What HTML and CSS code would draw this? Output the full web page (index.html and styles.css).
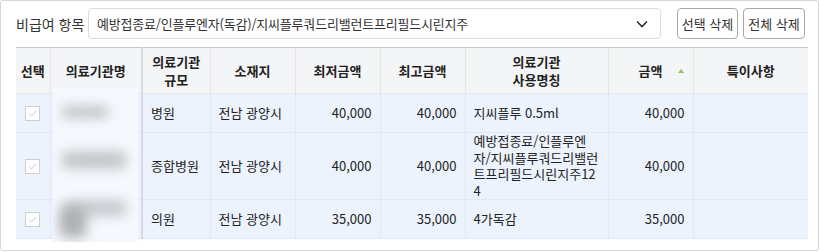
FILE: index.html
```html
<!DOCTYPE html>
<html lang="ko">
<head>
<meta charset="utf-8">
<link rel="stylesheet" href="styles.css">
</head>
<body>
<div class="panel">
  <div class="toolbar">
    <span class="label">비급여 항목</span>
    <div class="select">
      <span class="select-text">예방접종료/인플루엔자(독감)/지씨플루쿼드리밸런트프리필드시린지주</span>
      <svg class="chev" width="12" height="8" viewBox="0 0 12 8"><path d="M1 1.5 L6 6.5 L11 1.5" fill="none" stroke="#333" stroke-width="1.6"/></svg>
    </div>
    <button class="btn">선택 삭제</button>
    <button class="btn">전체 삭제</button>
  </div>
  <div class="table-wrap">
    <table class="grid">
      <colgroup>
        <col style="width:34px"><col style="width:92px"><col style="width:68px"><col style="width:85px"><col style="width:85px"><col style="width:85px"><col style="width:143px"><col style="width:85px"><col style="width:115px">
      </colgroup>
      <thead>
        <tr>
          <th>선택</th>
          <th class="frozen">의료기관명</th>
          <th><span class="two">의료기관</span><span class="two">규모</span></th>
          <th>소재지</th>
          <th>최저금액</th>
          <th>최고금액</th>
          <th><span class="two">의료기관</span><span class="two">사용명칭</span></th>
          <th class="sort">금액<span class="tri"></span></th>
          <th>특이사항</th>
        </tr>
      </thead>
      <tbody>
        <tr>
          <td class="chk"><span class="box"><svg width="9" height="7" viewBox="0 0 9 7"><path d="M1 3.5 L3.5 6 L8 1" fill="none" stroke="#c8c8c8" stroke-width="1"/></svg></span></td>
          <td class="frozen"></td>
          <td>병원</td>
          <td>전남 광양시</td>
          <td class="num">40,000</td>
          <td class="num">40,000</td>
          <td>지씨플루 0.5ml</td>
          <td class="num">40,000</td>
          <td></td>
        </tr>
        <tr>
          <td class="chk"><span class="box"><svg width="9" height="7" viewBox="0 0 9 7"><path d="M1 3.5 L3.5 6 L8 1" fill="none" stroke="#c8c8c8" stroke-width="1"/></svg></span></td>
          <td class="frozen"></td>
          <td>종합병원</td>
          <td>전남 광양시</td>
          <td class="num">40,000</td>
          <td class="num">40,000</td>
          <td class="wrap">예방접종료/인플루엔자/지씨플루쿼드리밸런트프리필드시린지주124</td>
          <td class="num">40,000</td>
          <td></td>
        </tr>
        <tr>
          <td class="chk"><span class="box"><svg width="9" height="7" viewBox="0 0 9 7"><path d="M1 3.5 L3.5 6 L8 1" fill="none" stroke="#c8c8c8" stroke-width="1"/></svg></span></td>
          <td class="frozen"></td>
          <td>의원</td>
          <td>전남 광양시</td>
          <td class="num">35,000</td>
          <td class="num">35,000</td>
          <td>4가독감</td>
          <td class="num">35,000</td>
          <td></td>
        </tr>
      </tbody>
    </table>
    <div class="mask">
      <div class="blob b1"></div>
      <div class="blob b2"></div>
      <div class="blob b3"></div>
      <div class="blob b4"></div>
    </div>
  </div>
</div>
</body>
</html>
```
FILE: styles.css
```css
* { box-sizing: border-box; }
html, body { margin: 0; padding: 0; background: #fff; }
body {
  font-family: "Noto Sans CJK KR", "Noto Sans", sans-serif;
  color: #222;
  font-size: 13px;
}
.panel {
  width: 819px;
  height: 251px;
  border: 1px solid #d6d6d6;
  border-radius: 3px;
  padding: 7px 12px 0 15px;
}
.toolbar {
  display: flex;
  align-items: center;
  height: 31px;
}
.label {
  font-size: 14px;
  color: #333;
  width: 72px;
  flex: none;
}
.select {
  flex: none;
  width: 573px;
  height: 31px;
  border: 1px solid #dcdcdc;
  border-radius: 4px;
  display: flex;
  align-items: center;
  justify-content: space-between;
  padding: 0 12px 0 8px;
  margin-right: 16px;
}
.select-text { font-size: 13px; color: #333; letter-spacing: -0.2px; white-space: nowrap; }
.btn {
  flex: none;
  white-space: nowrap;
  width: 61px;
  height: 31px;
  padding: 0;
  font-family: inherit;
  font-size: 13px;
  color: #333;
  background: #fff;
  border: 1px solid #a8a8a8;
  border-radius: 4px;
  margin-right: 5px;
}
.btn + .btn { width: 62px; margin-right: 0; }
.table-wrap {
  position: relative;
  margin-top: 8px;
  width: 792px;
}
.grid {
  border-collapse: collapse;
  table-layout: fixed;
  width: 792px;
}
.grid th {
  background: #f4f5f7;
  height: 46px;
  font-weight: 700;
  font-size: 13px;
  line-height: 18px;
  color: #222;
  border-top: 1px solid #c7c7c7;
  border-left: 1px solid #e6e6e6;
  padding: 0 4px;
  text-align: center;
}
.two { display: block; line-height: 18px; }
.grid th:first-child, .grid td:first-child { border-left: none; }
.grid td {
  background: #edf3fc;
  height: 39px;
  padding: 0 8px;
  line-height: 16.5px;
  border-top: 1px solid #e2e8f1;
  border-left: 1px solid #e2e8f1;
  border-bottom: 1px solid #e2e8f1;
  vertical-align: middle;
}
.grid .frozen + th, .grid .frozen + td { border-left: 2px solid #d5dbe4; }
.num { text-align: right; }
.wrap { word-break: break-all; }
.chk { text-align: center; padding: 0 !important; }
.box {
  display: inline-flex;
  align-items: center;
  justify-content: center;
  width: 15px;
  height: 15px;
  border: 1px solid #cfcfcf;
  background: #fff;
  vertical-align: middle;
}
.sort { position: relative; }
.tri {
  position: absolute;
  right: 9px;
  top: 21px;
  width: 0;
  height: 0;
  border-left: 3px solid transparent;
  border-right: 3px solid transparent;
  border-bottom: 4px solid #8fc45a;
}
.mask {
  position: absolute;
  left: 37px;
  top: 41px;
  width: 85px;
  height: 154px;
  background: #f5f8fd;
  overflow: hidden;
}
.blob {
  position: absolute;
  background: #b4b6ba;
  filter: blur(6px);
  border-radius: 8px;
}
.b1 { left: 8px; top: 18px; width: 48px; height: 12px; opacity: 0.8; }
.b2 { left: 8px; top: 63px; width: 66px; height: 18px; opacity: 0.75; }
.b3 { left: 8px; top: 112px; width: 66px; height: 16px; opacity: 0.7; }
.b4 { left: 6px; top: 120px; width: 28px; height: 30px; opacity: 0.8; background: #a0a2a6; }
```
